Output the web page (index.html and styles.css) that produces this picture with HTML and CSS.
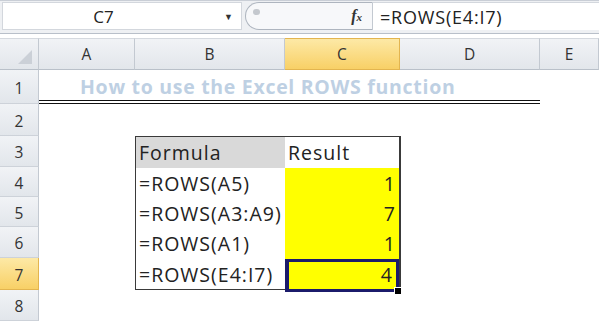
FILE: index.html
```html
<!DOCTYPE html>
<html lang="en">
<head>
  <meta charset="UTF-8" />
  <title>ROWS function</title>
  <link rel="stylesheet" href="styles.css">
</head>
<body>

<div class="formula-bar">
  <div class="name-box">
    <span class="name">C7</span>
    <span class="drop">&#9660;</span>
  </div>
  <div class="fx-box">
    <span class="grip"></span>
    <span class="fx">f<sub>x</sub></span>
  </div>
  <div class="formula-input">=ROWS(E4:I7)</div>
</div>

<div class="sheet">
  <div class="corner"><span class="tri"></span></div>
  <div class="col-head">A</div>
  <div class="col-head">B</div>
  <div class="col-head active">C</div>
  <div class="col-head">D</div>
  <div class="col-head">E</div>

  <div class="row-head">1</div>
  <div class="title">How to use the Excel ROWS function</div>
  <div class="blank"></div>

  <div class="row-head">2</div>
  <div class="blank wide"></div>

  <div class="row-head">3</div>
  <div class="blank"></div>
  <div class="table">
    <div class="cell head">Formula</div>
    <div class="cell">Result</div>
    <div class="cell">=ROWS(A5)</div>
    <div class="cell num">1</div>
    <div class="cell">=ROWS(A3:A9)</div>
    <div class="cell num">7</div>
    <div class="cell">=ROWS(A1)</div>
    <div class="cell num">1</div>
    <div class="cell">=ROWS(E4:I7)</div>
    <div class="cell num selected">4<span class="handle"></span></div>
  </div>

  <div class="row-head r4">4</div>
  <div class="row-head r5">5</div>
  <div class="row-head r6">6</div>
  <div class="row-head r7 active">7</div>
  <div class="row-head r8">8</div>
</div>

</body>
</html>
```

FILE: styles.css
```css
body {
  margin: 0;
  width: 599px;
  height: 321px;
  overflow: hidden;
  background-color: #fff;
  font-family: 'Open Sans', 'Liberation Sans', sans-serif;
  color: #222;
}
.formula-bar {
  height: 34px;
  box-sizing: border-box;
  display: flex;
  background-color: #eef0f3;
  border-top: 1px solid #c9ced6;
  border-bottom: 1px solid #b8bfc9;
}
.name-box {
  width: 238px;
  margin: 1px 0 3px 2px;
  background-color: #fff;
  border: 1px solid #d3d7dd;
  display: flex;
  align-items: center;
}
.name {
  flex: 1;
  text-align: center;
  font-size: 17px;
  padding-right: 20px;
}
.drop {
  font-size: 9px;
  color: #333;
  margin-right: 8px;
}
.fx-box {
  width: 126px;
  margin: 1px 0 3px 3px;
  border: 1px solid #aeb5bf;
  border-right: none;
  border-radius: 14px 0 0 14px;
  background-color: #f7f8fa;
  display: flex;
  align-items: center;
  justify-content: space-between;
}
.grip {
  width: 7px;
  height: 6px;
  margin-left: 7px;
  margin-top: -8px;
  border-radius: 4px;
  background-color: #c4c8ce;
}
.fx {
  font-family: 'Liberation Serif', serif;
  font-style: italic;
  font-weight: bold;
  font-size: 16px;
  color: #333;
  margin-right: 10px;
}
.fx sub {
  font-size: 11px;
  vertical-align: 0;
}
.formula-input {
  flex: 1;
  margin: 1px 0 3px 0;
  background-color: #fff;
  border-left: 1px solid #c3c9d1;
  border-top: 1px solid #d3d7dd;
  font-size: 18px;
  letter-spacing: 0.8px;
  padding-left: 7px;
  line-height: 28px;
}
.sheet {
  margin-top: 4px;
  display: grid;
  grid-template-columns: 39px 96px 150px 115px 140px 1fr;
  grid-template-rows: 32px 34px 32px 31px 30px 30px 31px 32px 31px;
}
.corner, .col-head, .row-head {
  background: linear-gradient(#f1f3f6, #e2e6eb);
  color: #333;
  font-size: 15.5px;
  display: flex;
  align-items: center;
  justify-content: center;
  box-sizing: border-box;
}
.corner, .col-head {
  border-top: 1px solid #d5d9df;
  border-right: 1px solid #c3c9d1;
  border-bottom: 1px solid #b9c0c9;
}
.corner {
  justify-content: flex-end;
  align-items: flex-end;
  padding: 0 6px 5px 0;
}
.tri {
  width: 0;
  height: 0;
  border-left: 14px solid transparent;
  border-bottom: 14px solid #cbd0d7;
}
.col-head.active, .row-head.active {
  background: linear-gradient(#fde9a6, #f8d066);
  border-color: #e3b54f;
}
.row-head {
  grid-column: 1;
  border-right: 1px solid #c3c9d1;
  border-bottom: 1px solid #cdd2d9;
  padding-top: 2px;
}
.r4 { grid-row: 5; }
.r5 { grid-row: 6; }
.r6 { grid-row: 7; }
.r7 { grid-row: 8; }
.r8 { grid-row: 9; }
.title {
  grid-column: 2 / 6;
  border-bottom: 4px double #111;
  color: #bed0e3;
  font-weight: bold;
  font-size: 19.5px;
  letter-spacing: 0.7px;
  padding-left: 41px;
  line-height: 34px;
  height: 30px;
  white-space: nowrap;
}
.blank.wide {
  grid-column: 2 / 7;
}
.table {
  grid-column: 3 / 5;
  grid-row: 4 / 9;
  display: grid;
  grid-template-columns: 149px 1fr;
  grid-template-rows: 31px 30px 30px 31px 32px;
  border: 1px solid #3a3a3a;
  border-right-width: 2px;
  margin-right: -1px;
}
.cell {
  font-size: 19.5px;
  letter-spacing: 1px;
  padding-left: 3px;
  line-height: 32px;
  white-space: nowrap;
}
.cell.head {
  background-color: #d9d9d9;
}
.cell.num {
  background-color: #ffff00;
  text-align: right;
  padding-right: 3px;
}
.cell.selected {
  position: relative;
  border: 3px solid #1b1b6b;
  border-left-width: 4px;
  line-height: 25px;
  margin-bottom: -1px;
}
.handle {
  position: absolute;
  right: -6px;
  bottom: -6px;
  width: 6px;
  height: 6px;
  background-color: #000;
  border: 1px solid #fff;
}
```
